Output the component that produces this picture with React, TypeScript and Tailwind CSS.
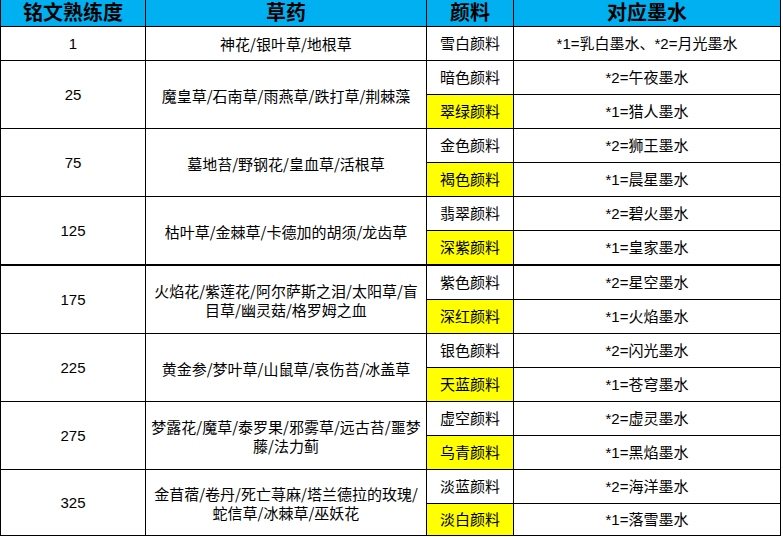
import React from "react";

const font = { fontFamily: '"Liberation Sans", "Noto Sans CJK SC", sans-serif' };
const cjk = { fontFamily: '"Noto Sans CJK SC", "Liberation Sans", sans-serif' };

type Group = {
  lvl: string;
  herbs: React.ReactNode;
  a: [string, string];
  b: [string, string];
  thick?: boolean;
};

const groups: Group[] = [
  { lvl: "25", herbs: "魔皇草/石南草/雨燕草/跌打草/荆棘藻", a: ["暗色颜料", "*2=午夜墨水"], b: ["翠绿颜料", "*1=猎人墨水"] },
  { lvl: "75", herbs: "墓地苔/野钢花/皇血草/活根草", a: ["金色颜料", "*2=狮王墨水"], b: ["褐色颜料", "*1=晨星墨水"] },
  { lvl: "125", herbs: "枯叶草/金棘草/卡德加的胡须/龙齿草", a: ["翡翠颜料", "*2=碧火墨水"], b: ["深紫颜料", "*1=皇家墨水"] },
  {
    lvl: "175",
    herbs: (
      <>
        火焰花/紫莲花/阿尔萨斯之泪/太阳草/盲
        <br />
        目草/幽灵菇/格罗姆之血
      </>
    ),
    a: ["紫色颜料", "*2=星空墨水"],
    b: ["深红颜料", "*1=火焰墨水"],
    thick: true,
  },
  { lvl: "225", herbs: "黄金参/梦叶草/山鼠草/哀伤苔/冰盖草", a: ["银色颜料", "*2=闪光墨水"], b: ["天蓝颜料", "*1=苍穹墨水"] },
  {
    lvl: "275",
    herbs: (
      <>
        梦露花/魔草/泰罗果/邪雾草/远古苔/噩梦
        <br />
        藤/法力蓟
      </>
    ),
    a: ["虚空颜料", "*2=虚灵墨水"],
    b: ["乌青颜料", "*1=黑焰墨水"],
  },
  {
    lvl: "325",
    herbs: (
      <>
        金苜蓿/卷丹/死亡荨麻/塔兰德拉的玫瑰/
        <br />
        蛇信草/冰棘草/巫妖花
      </>
    ),
    a: ["淡蓝颜料", "*2=海洋墨水"],
    b: ["淡白颜料", "*1=落雪墨水"],
  },
];

const base = "flex items-center justify-center text-center border-r border-b border-black";

export default function App() {
  return (
    <div className="w-[783px] h-[537px] bg-white" style={font}>
      <div className="grid w-[781px] border-l border-black grid-cols-[145px_281px_87px_267px] grid-rows-[27px_34px_34px_34px_34px_34px_34px_34px_35px_34px_34px_34px_34px_34px_34px_32px] text-[15px] leading-[19px] text-black">
        <div className={`${base} bg-[#00b0f0] font-bold text-[20px]`}>铭文熟练度</div>
        <div className={`${base} bg-[#00b0f0] font-bold text-[20px]`}>草药</div>
        <div className={`${base} bg-[#00b0f0] font-bold text-[20px]`}>颜料</div>
        <div className={`${base} bg-[#00b0f0] font-bold text-[20px]`}>对应墨水</div>

        <div className={base}>1</div>
        <div className={base}>
          <div style={cjk}>神花/银叶草/地根草</div>
        </div>
        <div className={base}>雪白颜料</div>
        <div className={base}>*1=乳白墨水、*2=月光墨水</div>

        {groups.map((g) => {
          const t = g.thick ? " border-t" : "";
          return (
            <React.Fragment key={g.lvl}>
              <div className={`${base} row-span-2${t}`}>{g.lvl}</div>
              <div className={`${base} row-span-2 px-1${t}`}>
                <div style={cjk} className="pt-px">{g.herbs}</div>
              </div>
              <div className={`${base}${t}`}>{g.a[0]}</div>
              <div className={`${base}${t}`}>{g.a[1]}</div>
              <div className={`${base} bg-[#ffff00]`}>{g.b[0]}</div>
              <div className={base}>{g.b[1]}</div>
            </React.Fragment>
          );
        })}
      </div>
    </div>
  );
}
